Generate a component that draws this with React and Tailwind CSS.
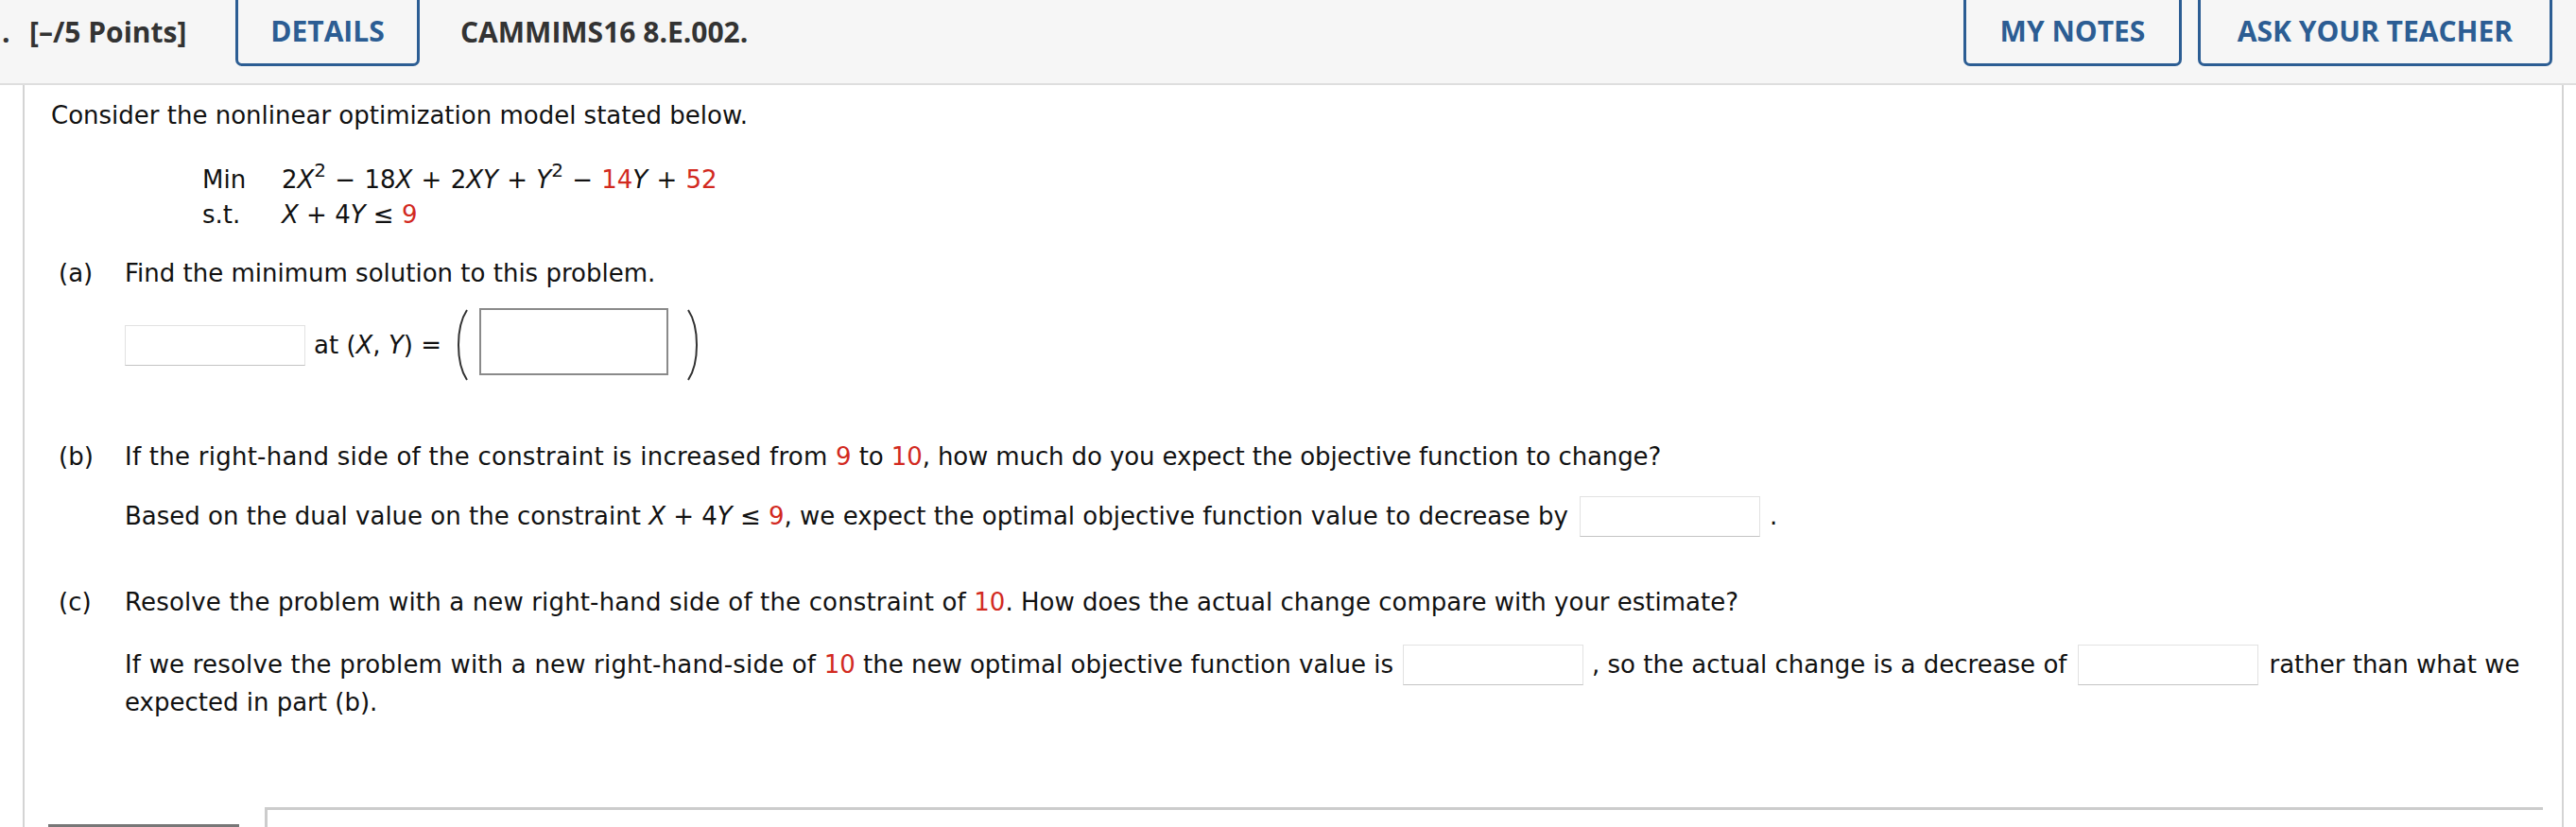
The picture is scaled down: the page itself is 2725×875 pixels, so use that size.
import React from "react";

const R = ({ children }) => <span className="text-[#d22a1f]">{children}</span>;
const V = ({ children }) => <i className="italic">{children}</i>;
const Op = ({ children }) => <span className="mx-[1px]">{children}</span>;
const Sup = () => <sup className="text-[20px] top-[-12px]">2</sup>;

function Field({ className = "" }) {
  return (
    <span
      className={
        "inline-block w-[191px] h-[43px] bg-white border border-[#e2e2e2] border-b-[#c4c4c4] shrink-0 " +
        className
      }
    />
  );
}

function Paren({ right = false }) {
  return (
    <svg width="21" height="78" viewBox="0 0 21 78" className="shrink-0">
      <path
        d={right ? "M3 2 C15 20 15 58 3 76" : "M18 2 C6 20 6 58 18 76"}
        fill="none"
        stroke="#333"
        strokeWidth="2"
      />
    </svg>
  );
}

function Part({ label, children }) {
  return (
    <div className="flex leading-[32px] h-[32px] whitespace-nowrap">
      <span className="ml-[36px] w-[70px]">{label}</span>
      <span>{children}</span>
    </div>
  );
}

export default function App() {
  const headBtn =
    "h-[70px] pb-[3px] border-[3px] border-t-0 border-[#2c5d93] rounded-b-[7px] flex items-center justify-center text-[#2c5d93]";
  return (
    <div className="w-[2725px] h-[875px] overflow-hidden bg-white flex flex-col">
      <header className="h-[90px] shrink-0 bg-[#f6f6f6] border-b-2 border-[#dedede] flex items-start font-['Open_Sans',sans-serif] font-bold text-[30px] text-[#333] whitespace-nowrap">
        <div className="w-[249px] h-[70px] pb-[3px] flex items-center">
          <span className="ml-[2px] w-[29px]">.</span>
          <span>[–/5 Points]</span>
        </div>
        <div className={headBtn + " w-[195px]"}>DETAILS</div>
        <div className="ml-[43px] h-[70px] pb-[3px] flex items-center">CAMMIMS16 8.E.002.</div>
        <div className="flex-1" />
        <div className={headBtn + " w-[231px]"}>MY NOTES</div>
        <div className={headBtn + " ml-[17px] w-[375px]"}>ASK YOUR TEACHER</div>
        <div className="w-[25px] shrink-0" />
      </header>

      <div className="flex-1 ml-[24px] mr-[13px] border-l-2 border-r-2 border-[#d4d4d4] pt-[16px] font-['DejaVu_Sans',sans-serif] text-[26px] text-[#111]">
        <div className="ml-[28px] leading-[32px] h-[32px] whitespace-nowrap">
          Consider the nonlinear optimization model stated below.
        </div>

        <div className="mt-[34px] ml-[188px] flex leading-[37px] h-[37px] whitespace-nowrap">
          <span className="w-[84px]">Min</span>
          <span>
            2<V>X</V>
            <Sup /> <Op>−</Op> 18<V>X</V> <Op>+</Op> 2<V>XY</V> <Op>+</Op> <V>Y</V>
            <Sup /> <Op>−</Op> <R>14</R>
            <V>Y</V> <Op>+</Op> <R>52</R>
          </span>
        </div>
        <div className="ml-[188px] flex leading-[37px] h-[37px] whitespace-nowrap">
          <span className="w-[84px]">s.t.</span>
          <span>
            <V>X</V> + 4<V>Y</V> ≤ <R>9</R>
          </span>
        </div>

        <div className="mt-[27px]">
          <Part label="(a)">Find the minimum solution to this problem.</Part>
        </div>
        <div className="mt-[19px] ml-[106px] h-[82px] flex items-center whitespace-nowrap">
          <Field />
          <span className="ml-[9px]">
            at (<V>X</V>, <V>Y</V>) =
          </span>
          <span className="ml-[9px]">
            <Paren />
          </span>
          <span className="ml-[10px] mb-[7px] w-[200px] h-[71px] border-2 border-[#8a8a8a] bg-white shrink-0" />
          <span className="ml-[18px]">
            <Paren right />
          </span>
        </div>

        <div className="mt-[61px]">
          <Part label="(b)">
            <span className="tracking-[0.25px]">
              If the right-hand side of the constraint is increased from{" "}
            </span>
            <R>9</R>
            <span className="tracking-[-0.12px]">
              {" "}
              to <R>10</R>, how much do you expect the objective function to change?
            </span>
          </Part>
        </div>
        <div className="mt-[25px] ml-[106px] h-[44px] flex items-center whitespace-nowrap">
          <span>
            Based on the dual value on the constraint <V>X</V> + 4<V>Y</V> ≤ <R>9</R>, we expect the
            optimal objective function value to decrease by
          </span>
          <Field className="ml-[12px]" />
          <span className="ml-[10px]">.</span>
        </div>

        <div className="mt-[53px]">
          <Part label="(c)">
            <span className="tracking-[0.15px]">
              Resolve the problem with a new right-hand side of the constraint of{" "}
            </span>
            <R>10</R>. How does the actual change compare with your estimate?
          </Part>
        </div>
        <div className="mt-[28px] ml-[106px] h-[44px] flex items-center whitespace-nowrap">
          <span>
            <span className="tracking-[0.18px]">
              If we resolve the problem with a new right-hand-side of{" "}
            </span>
            <R>10</R> the new optimal objective function value is
          </span>
          <Field className="ml-[10px]" />
          <span className="ml-[9px]">, so the actual change is a decrease of</span>
          <Field className="ml-[12px]" />
          <span className="ml-[11px]">rather than what we</span>
        </div>
        <div className="mt-[2px] ml-[106px] leading-[32px] h-[32px] whitespace-nowrap">
          expected in part (b).
        </div>

        <div className="mt-[95px] flex items-start">
          <div className="ml-[25px] mt-[18px] w-[202px] h-[20px] border-t-[3px] border-[#777]" />
          <div className="ml-[27px] mr-[20px] flex-1 h-[40px] border-t-[3px] border-l-[3px] border-[#cccccc]" />
        </div>
      </div>
    </div>
  );
}
